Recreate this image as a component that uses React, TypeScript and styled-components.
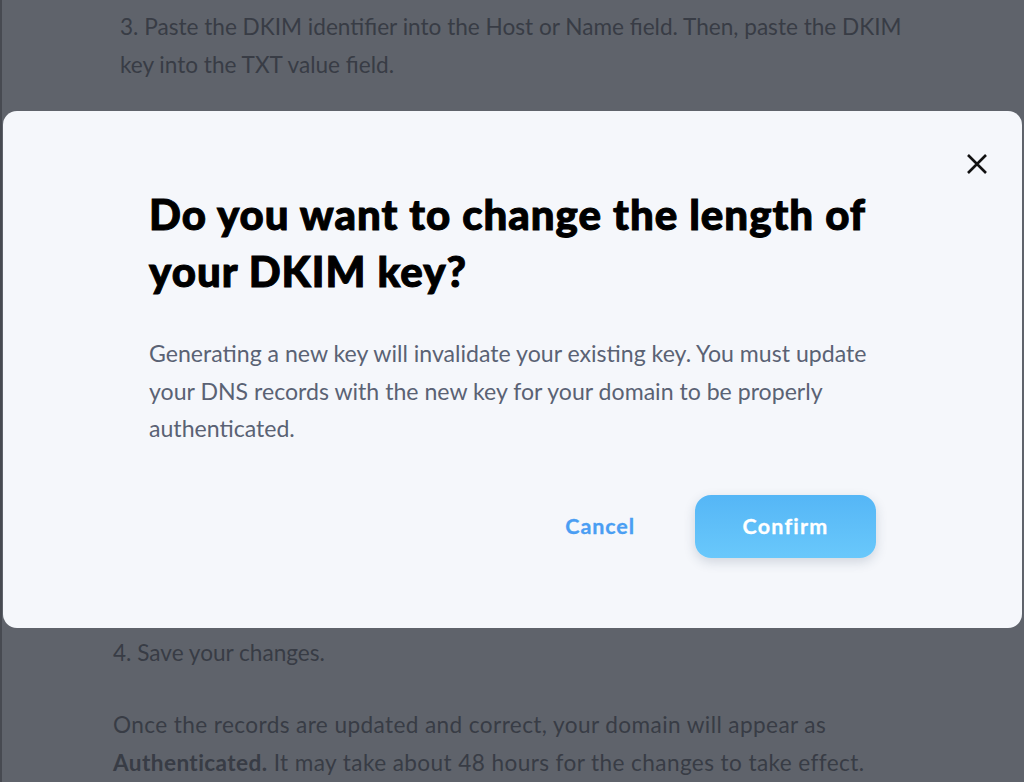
import React from "react";
import styled, { createGlobalStyle } from "styled-components";

const Global = createGlobalStyle`
  html, body { margin: 0; padding: 0; }
  body {
    width: 1024px;
    height: 782px;
    overflow: hidden;
    background: #5f636b;
    font-family: "Lato", "Noto Sans", sans-serif;
  }
`;

const Page = styled.div`
  position: relative;
  width: 1024px;
  height: 782px;
  box-sizing: border-box;
  border-left: 2px solid #474a51;
  background: #5f636b;
  overflow: hidden;
`;

const Article = styled.div`
  display: flex;
  flex-direction: column;
  padding: 8px 0 0 111px;
  color: #383c45;
  font-size: 22.6px;
  line-height: 38px;
`;

const Para = styled.p<{ $indent?: number; $mt?: number; $spacing?: number }>`
  margin: ${(p) => p.$mt ?? 0}px 0 0 ${(p) => p.$indent ?? 0}px;
  width: 790px;
  letter-spacing: ${(p) => p.$spacing ?? 0}px;
`;

const Strong = styled.strong`
  font-weight: 700;
`;

const Modal = styled.div`
  position: absolute;
  left: 1px;
  top: 111px;
  width: 1019px;
  height: 517px;
  box-sizing: border-box;
  background: #f5f7fb;
  border-radius: 14px;
  padding: 75px 146px 0 146px;
  display: flex;
  flex-direction: column;
`;

const Close = styled.button`
  position: absolute;
  right: 34px;
  top: 42px;
  width: 22px;
  height: 22px;
  padding: 0;
  border: 0;
  background: transparent;
  display: flex;
  align-items: center;
  justify-content: center;
  cursor: pointer;
`;

const Title = styled.h2`
  margin: 0;
  font-family: "Lato", sans-serif;
  font-weight: 900;
  font-size: 42px;
  line-height: 57px;
  color: #000;
  letter-spacing: 1px;
  -webkit-text-stroke: 1px #000;
`;

const Body = styled.p`
  margin: 35px 0 0 0;
  font-size: 23.1px;
  line-height: 37.5px;
  color: #5a6274;
`;

const Actions = styled.div`
  margin-top: 47px;
  display: flex;
  justify-content: flex-end;
  align-items: center;
  gap: 60px;
`;

const TextButton = styled.button`
  border: 0;
  background: transparent;
  font-family: "Lato", sans-serif;
  font-weight: 700;
  font-size: 21.5px;
  letter-spacing: 0.9px;
  color: #4a9ef3;
  -webkit-text-stroke: 0.3px #4a9ef3;
  padding: 0;
  cursor: pointer;
`;

const PrimaryButton = styled.button`
  width: 181px;
  height: 63px;
  border: 0;
  border-radius: 16px;
  background: linear-gradient(180deg, #55b6f6 0%, #69c8fb 100%);
  box-shadow: 0 4px 12px rgba(40, 60, 90, 0.18);
  color: #fff;
  font-family: "Lato", sans-serif;
  font-weight: 700;
  font-size: 21.5px;
  letter-spacing: 1.2px;
  -webkit-text-stroke: 0.3px #fff;
  cursor: pointer;
`;

export default function App() {
  return (
    <>
      <Global />
      <Page>
        <Article>
          <Para $indent={7}>
            3. Paste the DKIM identifier into the Host or Name field. Then, paste the DKIM
            key into the TXT value field.
          </Para>
          <Para $mt={550}>4. Save your changes.</Para>
          <Para $mt={34} $spacing={0.4}>
            Once the records are updated and correct, your domain will appear as{" "}
            <Strong>Authenticated.</Strong> It may take about 48 hours for the changes to take effect.
          </Para>
        </Article>
        <Modal role="dialog" aria-modal="true">
          <Close aria-label="Close">
            <svg width="22" height="22" viewBox="0 0 22 22">
              <path d="M2 2 L20 20 M20 2 L2 20" stroke="#111" strokeWidth="2.6" />
            </svg>
          </Close>
          <Title>Do you want to change the length of your DKIM key?</Title>
          <Body>
            Generating a new key will invalidate your existing key. You must update your DNS
            records with the new key for your domain to be properly authenticated.
          </Body>
          <Actions>
            <TextButton>Cancel</TextButton>
            <PrimaryButton>Confirm</PrimaryButton>
          </Actions>
        </Modal>
      </Page>
    </>
  );
}
